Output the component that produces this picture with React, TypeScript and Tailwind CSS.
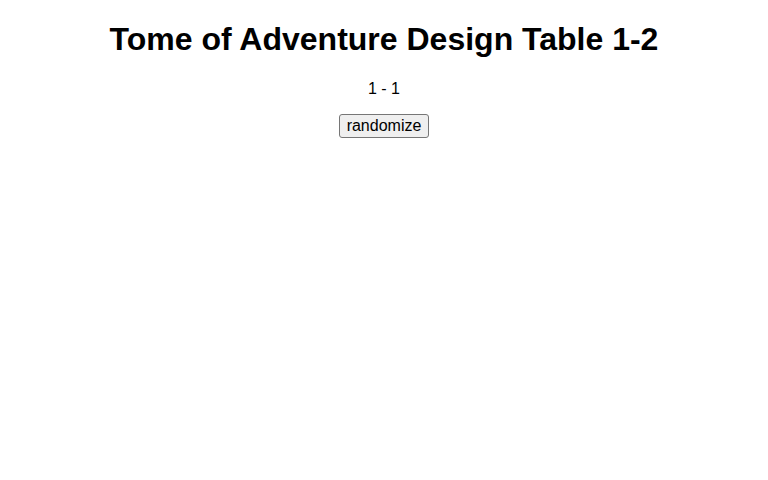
import React, { useState } from 'react';

function App() {
  const [roll, setRoll] = useState('1 - 1');

  const randomize = () => {
    const a = Math.floor(Math.random() * 6) + 1;
    const b = Math.floor(Math.random() * 6) + 1;
    setRoll(`${a} - ${b}`);
  };

  return (
    <div className="min-h-screen bg-white text-black text-center font-['Liberation_Sans',Arial,sans-serif]">
      <h1 className="pt-[21px] mb-[22px] text-[32px] leading-[37px] font-bold">
        Tome of Adventure Design Table 1-2
      </h1>
      <p className="text-base leading-[18px] mb-4">{roll}</p>
      <button
        onClick={randomize}
        className="h-[24px] px-[7px] text-base leading-[18px] bg-[#efefef] border border-[#767676] rounded-[3px] hover:bg-[#e5e5e5]"
      >
        randomize
      </button>
    </div>
  );
}

export default App;
